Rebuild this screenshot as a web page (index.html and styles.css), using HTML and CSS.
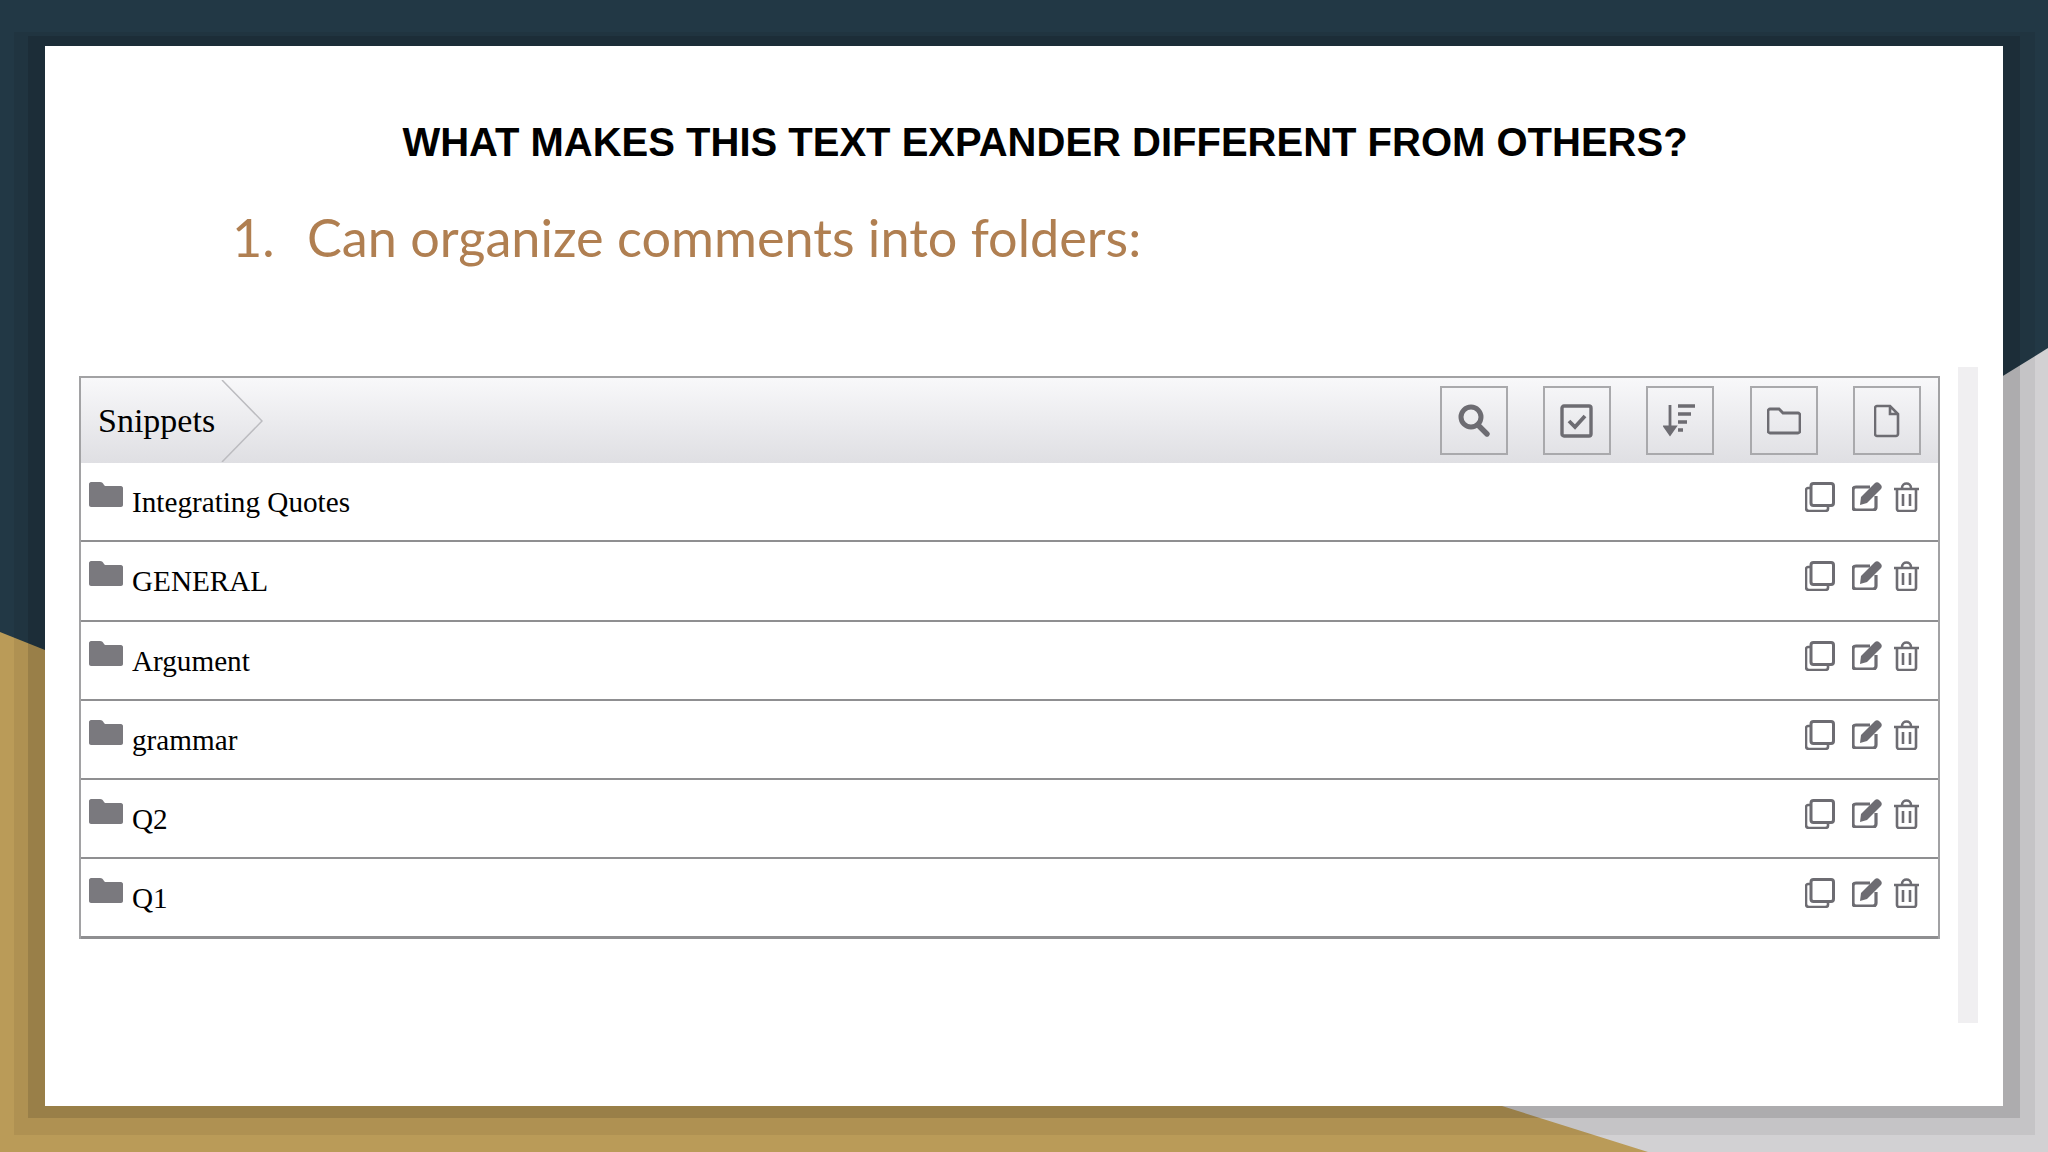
FILE: index.html
```html
<!DOCTYPE html>
<html lang="en">
<head>
    <meta charset="UTF-8">
    <title>What makes this text expander different</title>
    <link rel="stylesheet" href="styles.css">
</head>
<body>
    <svg class="sprite" aria-hidden="true">
        <symbol id="i-folder-solid" viewBox="0 0 34 25">
            <path d="M2 0h9c2 0 3 1 4 3l1 1h16c1 0 2 1 2 2v17c0 1-1 2-2 2H2c-1 0-2-1-2-2V2C0 1 1 0 2 0z"/>
        </symbol>
        <symbol id="i-search" viewBox="0 0 34 34">
            <circle cx="14" cy="13" r="10" fill="none" stroke="currentColor" stroke-width="5"/>
            <path d="M21 21l9 9" fill="none" stroke="currentColor" stroke-width="5.4" stroke-linecap="round"/>
        </symbol>
        <symbol id="i-check" viewBox="0 0 34 34">
            <rect x="2" y="2" width="29" height="30" rx="2" fill="none" stroke="currentColor" stroke-width="3.4"/>
            <path d="M9 17l6 6 10-11" fill="none" stroke="currentColor" stroke-width="3.8"/>
        </symbol>
        <symbol id="i-sort" viewBox="0 0 34 34">
            <path d="M7 1v28M2 23l5 7 5-7z" fill="currentColor" stroke="currentColor" stroke-width="2.8"/>
            <path d="M15 2h17M15 10h13M15 18h9M15 26h5" fill="none" stroke="currentColor" stroke-width="3.4"/>
        </symbol>
        <symbol id="i-folder" viewBox="0 0 34 28">
            <path d="M3 2h9l4 4h15c1 0 2 1 2 2v16c0 1-1 2-2 2H3c-1 0-2-1-2-2V4c0-1 1-2 2-2z" fill="none" stroke="currentColor" stroke-width="2.8"/>
        </symbol>
        <symbol id="i-file" viewBox="0 0 26 34">
            <path d="M3 2h13l8 8v20c0 1-1 2-2 2H3c-1 0-2-1-2-2V4c0-1 1-2 2-2zM16 2v8h8" fill="none" stroke="currentColor" stroke-width="2.6"/>
        </symbol>
        <symbol id="i-copy" viewBox="0 0 30 30">
            <path d="M5 6H3c-1 0-2 1-2 2v18c0 2 1 3 3 3h16c2 0 3-1 3-2v-3" fill="none" stroke="currentColor" stroke-width="2.6"/>
            <rect x="6" y="1.5" width="22.5" height="22" rx="2.5" fill="none" stroke="currentColor" stroke-width="3"/>
        </symbol>
        <symbol id="i-edit" viewBox="0 0 30 29">
            <path d="M18 5H4C2 5 1 6 1 8v17c0 2 1 3 3 3h17c2 0 3-1 3-3V14" fill="none" stroke="currentColor" stroke-width="3.2"/>
            <path d="M9 15L23 1c1-1 3-1 4 0l2 2c1 1 1 3 0 4L15 21l-7 2z" fill="currentColor"/>
        </symbol>
        <symbol id="i-trash" viewBox="0 0 27 30">
            <path d="M1 7h25M9 6c0-6 9-6 9 0M4 7v20c0 1 1 2 2 2h15c1 0 2-1 2-2V7M10 12v12M17 12v12" fill="none" stroke="currentColor" stroke-width="2.6"/>
        </symbol>
    </svg>

    <div class="bg-grey"></div>
    <div class="bg-gold"></div>
    <div class="band band-outer"></div>
    <div class="band band-inner"></div>

    <main class="slide">
        <h1 class="title">WHAT MAKES THIS TEXT EXPANDER DIFFERENT FROM OTHERS?</h1>
        <ol class="points">
            <li><span class="num">1.</span>Can organize comments into folders:</li>
        </ol>

        <div class="panel">
            <div class="snippets">
                <div class="head">
                    <span class="crumb">Snippets</span>
                    <svg class="chevron" viewBox="0 0 42 82"><path d="M1 0l40 41L1 82"/></svg>
                    <div class="tools">
                        <button class="tool"><svg class="ico-search"><use href="#i-search"/></svg></button>
                        <button class="tool"><svg class="ico-check"><use href="#i-check"/></svg></button>
                        <button class="tool"><svg class="ico-sort"><use href="#i-sort"/></svg></button>
                        <button class="tool"><svg class="ico-folder"><use href="#i-folder"/></svg></button>
                        <button class="tool"><svg class="ico-file"><use href="#i-file"/></svg></button>
                    </div>
                </div>

                <div class="row">
                    <svg class="folder"><use href="#i-folder-solid"/></svg>
                    <span class="name">Integrating Quotes</span>
                    <div class="actions">
                        <svg class="a-copy"><use href="#i-copy"/></svg>
                        <svg class="a-edit"><use href="#i-edit"/></svg>
                        <svg class="a-trash"><use href="#i-trash"/></svg>
                    </div>
                </div>
                <div class="row">
                    <svg class="folder"><use href="#i-folder-solid"/></svg>
                    <span class="name">GENERAL</span>
                    <div class="actions">
                        <svg class="a-copy"><use href="#i-copy"/></svg>
                        <svg class="a-edit"><use href="#i-edit"/></svg>
                        <svg class="a-trash"><use href="#i-trash"/></svg>
                    </div>
                </div>
                <div class="row">
                    <svg class="folder"><use href="#i-folder-solid"/></svg>
                    <span class="name">Argument</span>
                    <div class="actions">
                        <svg class="a-copy"><use href="#i-copy"/></svg>
                        <svg class="a-edit"><use href="#i-edit"/></svg>
                        <svg class="a-trash"><use href="#i-trash"/></svg>
                    </div>
                </div>
                <div class="row">
                    <svg class="folder"><use href="#i-folder-solid"/></svg>
                    <span class="name">grammar</span>
                    <div class="actions">
                        <svg class="a-copy"><use href="#i-copy"/></svg>
                        <svg class="a-edit"><use href="#i-edit"/></svg>
                        <svg class="a-trash"><use href="#i-trash"/></svg>
                    </div>
                </div>
                <div class="row">
                    <svg class="folder"><use href="#i-folder-solid"/></svg>
                    <span class="name">Q2</span>
                    <div class="actions">
                        <svg class="a-copy"><use href="#i-copy"/></svg>
                        <svg class="a-edit"><use href="#i-edit"/></svg>
                        <svg class="a-trash"><use href="#i-trash"/></svg>
                    </div>
                </div>
                <div class="row last">
                    <svg class="folder"><use href="#i-folder-solid"/></svg>
                    <span class="name">Q1</span>
                    <div class="actions">
                        <svg class="a-copy"><use href="#i-copy"/></svg>
                        <svg class="a-edit"><use href="#i-edit"/></svg>
                        <svg class="a-trash"><use href="#i-trash"/></svg>
                    </div>
                </div>
            </div>
            <div class="scrollbar"></div>
        </div>
    </main>
</body>
</html>
```

FILE: styles.css
```css
html, body {
    height: 100%;
}

body {
    margin: 0;
    padding: 46px 45px;
    box-sizing: border-box;
    height: 1152px;
    overflow: hidden;
    position: relative;
    background-color: #223845;
    font-family: "Liberation Serif", serif;
}

.sprite {
    display: none;
}

.bg-grey, .bg-gold {
    position: absolute;
    top: 0;
    left: 0;
    width: 2048px;
    height: 1152px;
}

.bg-grey {
    background-color: #d2d1d3;
    clip-path: polygon(2048px 348px, 1400px 748px, 1400px 1152px, 2048px 1152px);
}

.bg-gold {
    background-color: #ba9b58;
    clip-path: polygon(0 632px, 45px 650px, 1502px 1106px, 1648px 1152px, 0 1152px);
}

/* stepped shadow round the slide */
.band {
    position: absolute;
}

.band-outer {
    left: 14px;
    top: 32px;
    width: 2021px;
    height: 1103px;
    background: rgba(0,0,0,0.06);
}

.band-inner {
    left: 28px;
    top: 36px;
    width: 1992px;
    height: 1082px;
    background: rgba(0,0,0,0.12);
}

.slide {
    position: relative;
    height: 1060px;
    background: white;
}

.title {
    margin: 0;
    padding: 72px 0 0 42px;
    font-family: "Liberation Sans", Arial, sans-serif;
    font-size: 40px;
    line-height: 48px;
    font-weight: bold;
    color: #000;
    text-align: center;
}

.points {
    list-style: none;
    margin: 38px 0 0 187px;
    padding: 0;
    font-family: Lato, sans-serif;
    font-size: 52.2px;
    line-height: 66px;
    color: #b07f51;
}

.num {
    display: inline-block;
    width: 75px;
}

.panel {
    display: flex;
    align-items: flex-start;
    gap: 18px;
    margin: 97px 0 0 34px;
}

.snippets {
    width: 1861px;
    box-sizing: border-box;
    margin-top: 9px;
    border: 2px solid #a2a2a4;
    border-bottom: 0;
}

.head {
    display: flex;
    align-items: center;
    height: 85px;
    padding: 0 17px 0 17px;
    background: linear-gradient(#f8f8fa, #dfdfe3);
}

.crumb {
    font-size: 34px;
    color: #000;
}

.chevron {
    width: 42px;
    height: 82px;
    margin-left: 6px;
    fill: none;
    stroke: #bcbcc0;
    stroke-width: 1.5;
}

.tools {
    display: flex;
    gap: 35.3px;
    margin-left: auto;
}

.tool {
    display: flex;
    align-items: center;
    justify-content: center;
    width: 68px;
    height: 69px;
    padding: 0;
    border: 2px solid #a9a9ac;
    background: transparent;
    color: #6d6c72;
}

.ico-search { width: 34px; height: 34px; }
.ico-check { width: 34px; height: 34px; }
.ico-sort { width: 34px; height: 34px; }
.ico-folder { width: 34px; height: 28px; }
.ico-file { width: 26px; height: 34px; }

.row {
    display: flex;
    align-items: flex-start;
    box-sizing: border-box;
    height: 79.25px;
    padding: 19px 18px 0 8px;
    border-bottom: 2px solid #8f8f91;
    background: white;
}

.row.last {
    border-bottom-width: 3px;
}

.folder {
    width: 34px;
    height: 25px;
    fill: #7a797e;
}

.name {
    margin: 3px 0 0 9px;
    font-size: 29.2px;
    line-height: 34px;
    color: #000;
}

.actions {
    display: flex;
    align-items: flex-start;
    margin-left: auto;
    color: #6d6c72;
}

.a-copy { width: 30px; height: 30px; }
.a-edit { width: 30px; height: 29px; margin-left: 17px; }
.a-trash { width: 27px; height: 30px; margin-left: 11px; }

.scrollbar {
    width: 20px;
    height: 656px;
    background: #f0eff1;
}
```
